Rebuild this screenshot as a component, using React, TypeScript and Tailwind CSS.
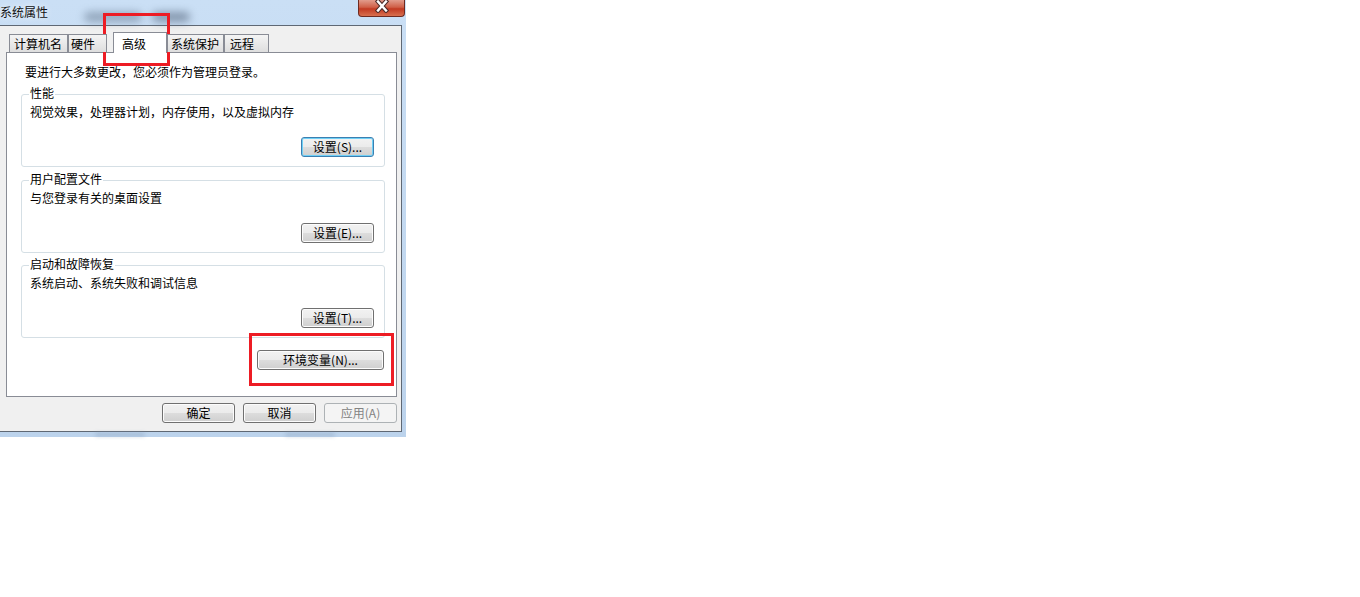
import React from "react";

const FONT = "font-['Noto_Sans_CJK_SC','Liberation_Sans',sans-serif]";

function WinButton({
  label,
  width,
  focused = false,
  disabled = false,
}: {
  label: string;
  width: string;
  focused?: boolean;
  disabled?: boolean;
}) {
  if (disabled) {
    return (
      <div
        className={`${width} h-[20px] rounded-[3px] border border-[#adb2b5] bg-[#f4f4f4] flex items-center justify-center text-[12px] leading-[14px] text-[#838383]`}
      >
        {label}
      </div>
    );
  }
  return (
    <div
      className={`${width} h-[20px] rounded-[3px] border ${
        focused
          ? "border-[#3c7fb1] shadow-[inset_0_0_0_1px_#6fd0f6]"
          : "border-[#707070] shadow-[inset_0_0_0_1px_#fcfcfc]"
      } bg-[linear-gradient(to_bottom,#f2f2f2_0%,#ebebeb_50%,#dddddd_50%,#cfcfcf_100%)] flex items-center justify-center text-[12px] leading-[14px] text-black`}
    >
      {label}
    </div>
  );
}

function Group({
  title,
  text,
  button,
  focused = false,
  className = "",
}: {
  title: string;
  text: string;
  button: string;
  focused?: boolean;
  className?: string;
}) {
  return (
    <div
      className={`w-[364px] rounded-[3px] border border-[#d5dfe5] pb-[9px] flex flex-col ${className}`}
    >
      <div className="-mt-[9px] ml-[7px] px-[1px] bg-white w-fit text-[12px] leading-[14px] text-black">
        {title}
      </div>
      <div className="mt-[5px] pl-[8px] text-[12px] leading-[14px] text-black">
        {text}
      </div>
      <div className="mt-[18px] flex justify-end pr-[10px]">
        <WinButton label={button} width="w-[73px]" focused={focused} />
      </div>
    </div>
  );
}

function Tab({
  label,
  width,
  pl,
}: {
  label: string;
  width: string;
  pl: string;
}) {
  return (
    <div
      className={`${width} ${pl} h-[18px] pt-[2px] border border-b-0 border-[#898c95] bg-[linear-gradient(to_bottom,#f4f4f4,#dedede)] text-[12px] leading-[14px] text-black whitespace-nowrap`}
    >
      {label}
    </div>
  );
}

export default function App() {
  return (
    <div className={`relative w-full h-[597px] bg-white overflow-hidden ${FONT}`}>
      {/* Window */}
      <div className="relative w-[406px] h-[437px] flex flex-col bg-[linear-gradient(to_bottom,#cadff5,#bcd3ec)]">
        {/* Title bar */}
        <div className="relative h-[25px] shrink-0 flex items-start justify-between">
          <div className="absolute left-[84px] top-[12px] w-[58px] h-[10px] rounded-full bg-[#62758b] opacity-55 blur-[4px]" />
          <div className="absolute left-[152px] top-[12px] w-[38px] h-[10px] rounded-full bg-[#52637a] opacity-60 blur-[4px]" />
          <span className="relative pt-[5px] text-[12px] leading-[14px] text-[#111] [text-shadow:0_0_6px_#ffffff]">
            系统属性
          </span>
          <div className="relative mr-[1px] w-[47px] h-[17px] rounded-b-[4px] border border-t-0 border-[#6e2a20] bg-[linear-gradient(to_bottom,#e29c8c_0%,#d06048_45%,#c23a22_55%,#d8704f_100%)] flex items-start justify-center">
            <svg width="14" height="13" viewBox="0 0 14 13">
              <path
                d="M3 1.5 L11 10.5 M11 1.5 L3 10.5"
                stroke="#4a2a28"
                strokeWidth="4.5"
                strokeLinecap="square"
              />
              <path
                d="M3 1.5 L11 10.5 M11 1.5 L3 10.5"
                stroke="#ffffff"
                strokeWidth="2.4"
                strokeLinecap="square"
              />
            </svg>
          </div>
        </div>

        {/* Body row */}
        <div className="flex flex-1">
          <div className="w-[402px] h-[407px] bg-[#f0f0f0] border-t border-r border-b border-[#5f6874] pt-[6px] pl-[6px] flex flex-col">
            {/* Tabs */}
            <div className="relative z-10 h-[20px] flex items-end pl-[3px]">
              <Tab label="计算机名" width="w-[59px]" pl="pl-[4px]" />
              <Tab label="硬件" width="w-[39px]" pl="pl-[2px]" />
              <div className="w-[6px]" />
              <div className="w-[54px] h-[21px] -mb-[1px] pl-[8px] pt-[4px] border border-b-0 border-[#898c95] bg-white text-[12px] leading-[14px] text-black">
                高级
              </div>
              <Tab label="系统保护" width="w-[57px]" pl="pl-[3px]" />
              <Tab label="远程" width="w-[45px]" pl="pl-[5px]" />
            </div>

            {/* Panel */}
            <div className="w-[391px] h-[345px] border border-[#898c95] bg-white pt-[12px] flex flex-col">
              <div className="pl-[18px] text-[12px] leading-[14px] text-black">
                要进行大多数更改，您必须作为管理员登录。
              </div>
              <div className="pl-[14px] flex flex-col">
                <Group
                  className="mt-[15px]"
                  title="性能"
                  text="视觉效果，处理器计划，内存使用，以及虚拟内存"
                  button="设置(S)..."
                  focused
                />
                <Group
                  className="mt-[13px]"
                  title="用户配置文件"
                  text="与您登录有关的桌面设置"
                  button="设置(E)..."
                />
                <Group
                  className="mt-[12px]"
                  title="启动和故障恢复"
                  text="系统启动、系统失败和调试信息"
                  button="设置(T)..."
                />
                <div className="w-[364px] mt-[12px] flex justify-end pr-[1px]">
                  <WinButton label="环境变量(N)..." width="w-[127px]" />
                </div>
              </div>
            </div>

            {/* Bottom buttons */}
            <div className="w-[391px] mt-[6px] flex justify-end gap-[8px]">
              <WinButton label="确定" width="w-[73px]" />
              <WinButton label="取消" width="w-[73px]" />
              <WinButton label="应用(A)" width="w-[73px]" disabled />
            </div>
          </div>
          <div className="flex-1" />
        </div>
        {/* bottom glass strip decoration */}
        <div className="absolute left-[95px] bottom-[1px] w-[50px] h-[3px] rounded-full bg-[#7f97b3] opacity-50 blur-[2px]" />
        <div className="absolute left-[285px] bottom-[1px] w-[50px] h-[3px] rounded-full bg-[#7f97b3] opacity-50 blur-[2px]" />
      </div>

      {/* Red annotation boxes */}
      <div className="absolute left-[103px] top-[13px] w-[67px] h-[53px] border-[3px] border-[#ed1c24]" />
      <div className="absolute left-[249px] top-[333px] w-[145px] h-[53px] border-[3px] border-[#ed1c24]" />
    </div>
  );
}
